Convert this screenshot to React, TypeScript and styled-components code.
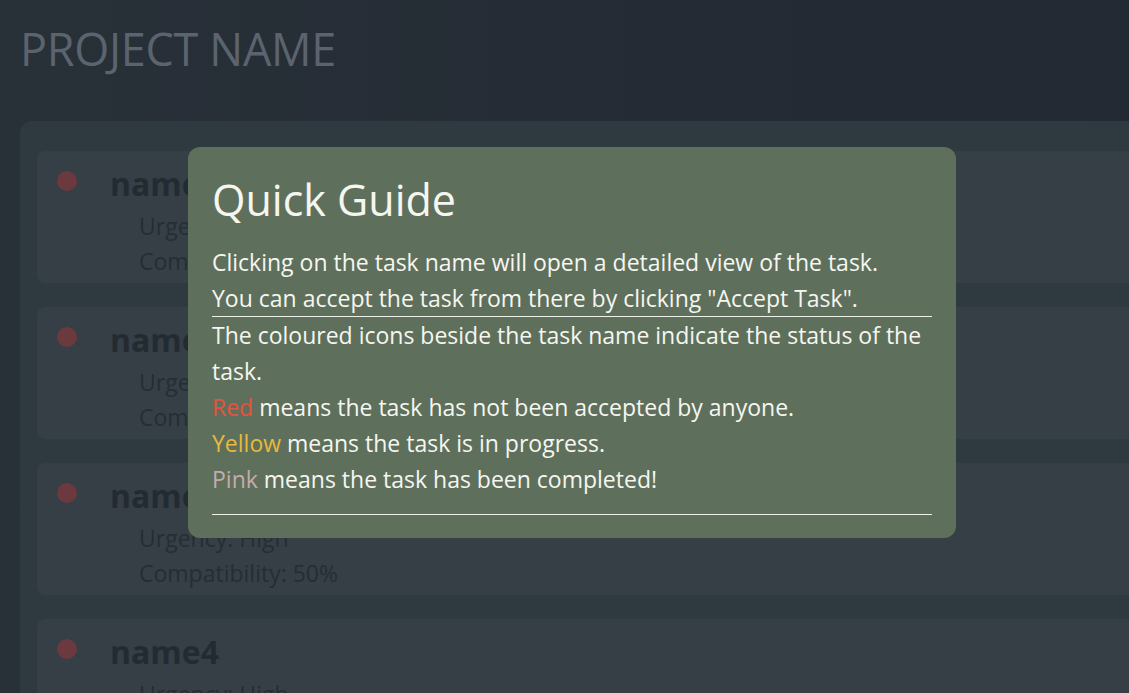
import React from "react";
import styled, { createGlobalStyle } from "styled-components";

const tasks = [
  { id: 1, name: "name1", urgency: "High", compatibility: 50 },
  { id: 2, name: "name2", urgency: "High", compatibility: 50 },
  { id: 3, name: "name3", urgency: "High", compatibility: 50 },
  { id: 4, name: "name4", urgency: "High", compatibility: 50 },
];

export default function App() {
  return (
    <>
      <GlobalStyle />
      <Page>
        <Title>PROJECT NAME</Title>
        <TaskPanel>
          {tasks.map((task) => (
            <TaskCard key={task.id}>
              <StatusDot />
              <TaskInfo>
                <TaskName>{task.name}</TaskName>
                <TaskMeta>Urgency: {task.urgency}</TaskMeta>
                <TaskMeta>Compatibility: {task.compatibility}%</TaskMeta>
              </TaskInfo>
            </TaskCard>
          ))}
        </TaskPanel>

        <GuideModal>
          <GuideTitle>Quick Guide</GuideTitle>
          <GuideBlock>
            Clicking on the task name will open a detailed view of the task.
            <br />
            You can accept the task from there by clicking "Accept Task".
          </GuideBlock>
          <GuideBlock $spaced>
            The coloured icons beside the task name indicate the status of the
            task.
            <br />
            <Colour $c="#e5533f">Red</Colour> means the task has not been
            accepted by anyone.
            <br />
            <Colour $c="#e9b93a">Yellow</Colour> means the task is in progress.
            <br />
            <Colour $c="#c6abab">Pink</Colour> means the task has been
            completed!
          </GuideBlock>
        </GuideModal>
      </Page>
    </>
  );
}

const GlobalStyle = createGlobalStyle`
  html, body {
    margin: 0;
    padding: 0;
    height: 100%;
    overflow: hidden;
  }
  body {
    font-family: "Open Sans", "Noto Sans", sans-serif;
    background: #252c34;
  }
`;

const Page = styled.div`
  position: relative;
  height: 693px;
  padding: 0 0 0 20px;
  overflow: hidden;
  background: linear-gradient(90deg, #283038 0%, #252c35 50%, #222932 100%);
`;

const Title = styled.h1`
  margin: 0;
  padding: 20px 0 43px;
  font-size: 45px;
  font-weight: 400;
  line-height: 58px;
  color: #5b636e;
  letter-spacing: -0.3px;
`;

const TaskPanel = styled.div`
  display: flex;
  flex-direction: column;
  gap: 24px;
  padding: 30px 0 0 17px;
  background: #2e3a40;
  border-radius: 12px 0 0 0;
  min-height: 600px;
`;

const TaskCard = styled.div`
  display: flex;
  align-items: flex-start;
  height: 132px;
  box-sizing: border-box;
  padding: 20px 0 0 20px;
  background: #353f45;
  border-radius: 8px 0 0 8px;
`;

const StatusDot = styled.span`
  flex: none;
  width: 20px;
  height: 20px;
  border-radius: 50%;
  background: #6c3a3e;
`;

const TaskInfo = styled.div`
  display: flex;
  flex-direction: column;
  margin-left: 33px;
`;

const TaskName = styled.div`
  font-size: 32px;
  font-weight: 700;
  line-height: 26px;
  color: #232b32;
  margin-bottom: 12px;
`;

const TaskMeta = styled.div`
  font-size: 23px;
  line-height: 35px;
  color: #252e35;
  margin-left: 29px;
`;

const GuideModal = styled.div`
  position: absolute;
  left: 188px;
  top: 147px;
  width: 768px;
  box-sizing: border-box;
  padding: 24px 24px 23px;
  background: #5e705c;
  border-radius: 12px;
  color: #f6f6f1;
`;

const GuideTitle = styled.h2`
  margin: 0 0 16px;
  font-size: 43px;
  font-weight: 400;
  line-height: 57px;
`;

const GuideBlock = styled.p<{ $spaced?: boolean }>`
  margin: 0;
  font-size: 23px;
  line-height: 36px;
  border-bottom: 1px solid #eef0ea;
  padding-bottom: ${(p) => (p.$spaced ? "17px" : "0")};
`;

const Colour = styled.span<{ $c: string }>`
  color: ${(p) => p.$c};
`;
